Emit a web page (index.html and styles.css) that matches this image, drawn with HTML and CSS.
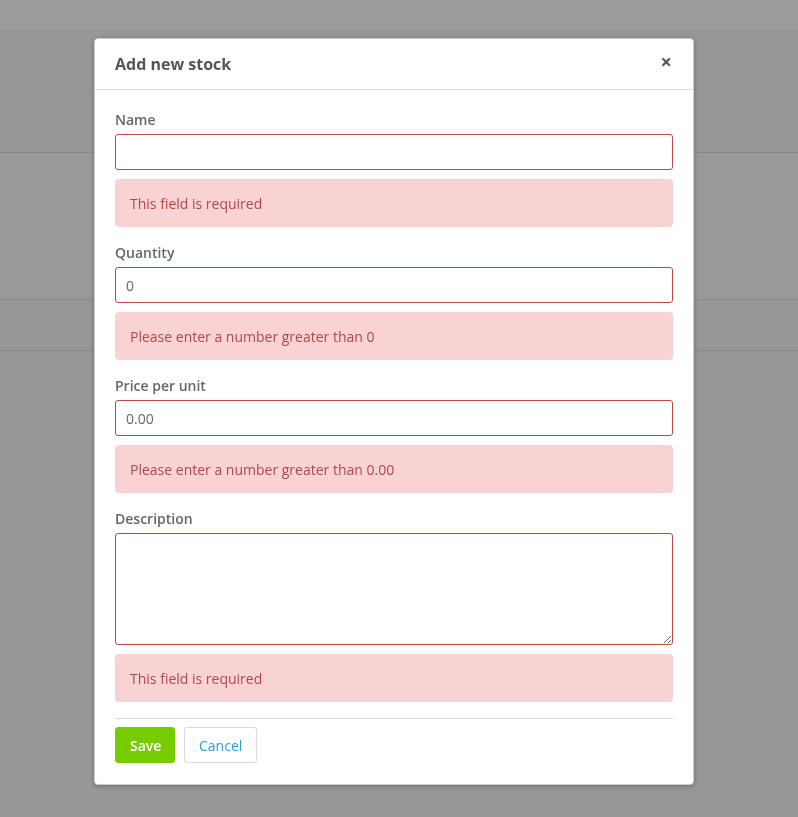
FILE: index.html
```html
<!DOCTYPE html>
<html>
<head>
<meta charset="utf-8">
<link rel="stylesheet" href="styles.css">
</head>
<body>
<div class="page">
  <div class="topbar"></div>
  <div class="row row-a"></div>
  <div class="row row-b"></div>
  <div class="row row-c"></div>
</div>
<div class="overlay">
  <div class="modal">
    <div class="modal-header">
      <h2 class="modal-title">Add new stock</h2>
      <span class="close">&times;</span>
    </div>
    <div class="modal-body">
      <div class="group">
        <label class="label">Name</label>
        <input class="field" type="text" value="">
        <div class="alert">This field is required</div>
      </div>
      <div class="group">
        <label class="label">Quantity</label>
        <input class="field" type="text" value="0">
        <div class="alert">Please enter a number greater than 0</div>
      </div>
      <div class="group">
        <label class="label">Price per unit</label>
        <input class="field" type="text" value="0.00">
        <div class="alert">Please enter a number greater than 0.00</div>
      </div>
      <div class="group">
        <label class="label">Description</label>
        <textarea class="field area"></textarea>
        <div class="alert">This field is required</div>
      </div>
      <div class="footer">
        <button class="btn btn-save">Save</button>
        <button class="btn btn-cancel">Cancel</button>
      </div>
    </div>
  </div>
</div>
</body>
</html>
```
FILE: styles.css
```css
html, body {
  margin: 0;
  padding: 0;
  height: 100%;
}
body {
  font-family: "Open Sans", "Liberation Sans", sans-serif;
  background: #979797;
  overflow: hidden;
}
.page {
  display: flex;
  flex-direction: column;
}
.topbar {
  height: 30px;
  background: #9b9b9b;
  box-shadow: 0 1px 2px rgba(0,0,0,0.15);
  border-bottom: 1px solid #8e8e8e;
}
.row-a {
  height: 121px;
  background: #979797;
  border-bottom: 1px solid #8a8a8a;
}
.row-b {
  height: 146px;
  background: #999999;
  border-bottom: 1px solid #8a8a8a;
}
.row-c {
  height: 50px;
  background: #979797;
  border-bottom: 1px solid #8a8a8a;
}
.overlay {
  position: fixed;
  inset: 0;
  padding: 38px 0 0 94px;
}
.modal {
  width: 598px;
  background: #fff;
  border: 1px solid #d0d0d0;
  border-radius: 4px;
  box-shadow: 0 1px 4px rgba(0,0,0,0.3);
}
.modal-header {
  height: 51px;
  box-sizing: border-box;
  border-bottom: 1px solid #d9d9d9;
  display: flex;
  align-items: center;
  justify-content: space-between;
  padding: 0 20px;
}
.modal-title {
  margin: 0;
  font-size: 16px;
  font-weight: 700;
  color: #555;
  line-height: 22px;
}
.close {
  font-size: 20px;
  font-weight: 700;
  color: #555;
  line-height: 20px;
  margin-right: 1px;
  margin-top: -4px;
}
.modal-body {
  padding: 20px 20px 21px;
}
.group {
  display: flex;
  flex-direction: column;
  margin-bottom: 16px;
}
.label {
  font-size: 14px;
  font-weight: 600;
  color: #666;
  line-height: 20px;
  margin-bottom: 4px;
}
.field {
  box-sizing: border-box;
  height: 36px;
  border: 1px solid #b94a48;
  border-radius: 3px;
  padding: 0 10px;
  font-family: "Open Sans", "Liberation Sans", sans-serif;
  font-size: 14px;
  color: #666;
  background: #fff;
  outline: none;
}
.area {
  height: 112px;
  resize: vertical;
}
.alert {
  margin-top: 9px;
  height: 48px;
  box-sizing: border-box;
  padding: 15px 15px 13px;
  background: #f9d3d4;
  color: #b0474a;
  border-radius: 4px;
  font-size: 14px;
  line-height: 20px;
}
.footer {
  border-top: 1px solid #d9d9d9;
  padding-top: 8px;
  display: flex;
  gap: 9px;
}
.btn {
  box-sizing: border-box;
  height: 36px;
  border-radius: 3px;
  font-family: "Open Sans", "Liberation Sans", sans-serif;
  font-size: 14px;
  padding: 0 14px;
}
.btn-save {
  width: 60px;
  background: #77cc00;
  border: 1px solid #77cc00;
  color: #fff;
  font-weight: 600;
}
.btn-cancel {
  width: 73px;
  background: #fff;
  border: 1px solid #d9d9d9;
  color: #2a9fd6;
}
```
